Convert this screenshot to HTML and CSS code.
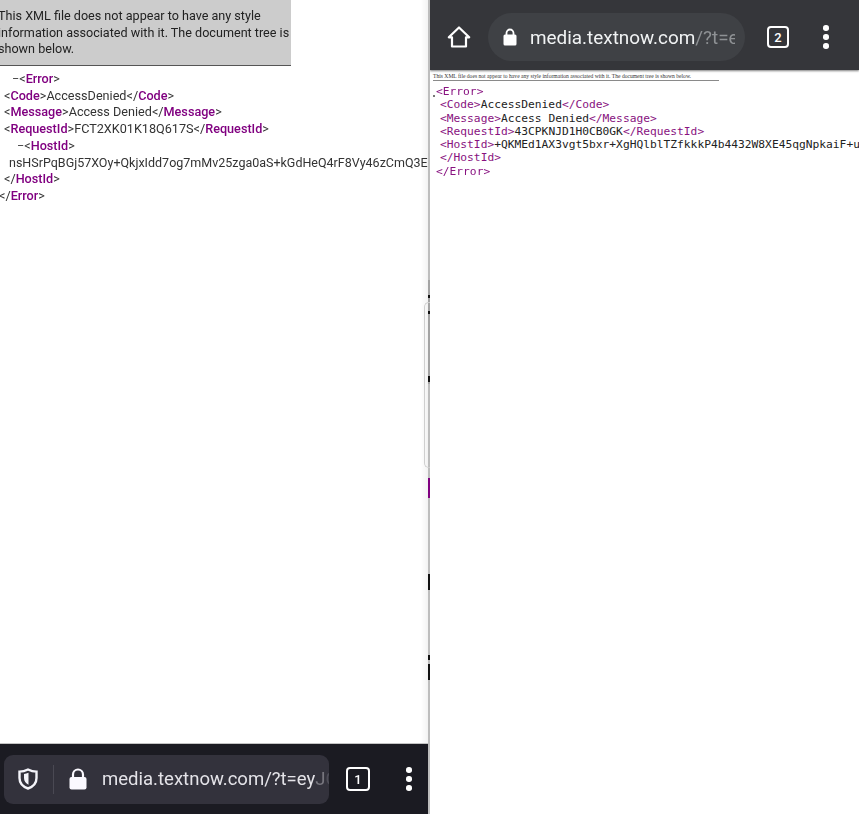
FILE: index.html
```html
<!DOCTYPE html>
<html lang="en">
<head>
<meta charset="utf-8">
<title>Access Denied</title>
<link rel="stylesheet" href="styles.css">
</head>
<body>
<div class="split">
  <section class="left">
    <div class="left-page">
      <div class="notice">This XML file does not appear to have any style<br>information associated with it. The document tree is<br>shown below.</div>
      <div class="tree">
        <div class="l-error"><span class="minus">−</span>&lt;<b>Error</b>&gt;</div>
        <div class="l-child">&lt;<b>Code</b>&gt;AccessDenied&lt;/<b>Code</b>&gt;</div>
        <div class="l-child">&lt;<b>Message</b>&gt;Access Denied&lt;/<b>Message</b>&gt;</div>
        <div class="l-child">&lt;<b>RequestId</b>&gt;FCT2XK01K18Q617S&lt;/<b>RequestId</b>&gt;</div>
        <div class="l-host"><span class="minus">−</span>&lt;<b>HostId</b>&gt;</div>
        <div class="l-value">nsHSrPqBGj57XOy+QkjxIdd7og7mMv25zga0aS+kGdHeQ4rF8Vy46zCmQ3E</div>
        <div class="l-child">&lt;/<b>HostId</b>&gt;</div>
        <div class="l-close">&lt;/<b>Error</b>&gt;</div>
      </div>
    </div>
    <div class="bottom-bar">
      <div class="bottom-url">
        <svg class="shield" viewBox="0 0 20 22" width="20" height="22"><path d="M10 1.500C7 3 4.500 3.600 1.500 3.600V10c0 5 3.400 8.700 8.500 10.500C15.100 18.700 18.500 15 18.500 10V3.600C15.500 3.600 13 3 10 1.500Z" fill="none" stroke="#f4f4fa" stroke-width="2.400"/><path d="M10.500 4.800C9 5.400 7.500 5.800 6 5.900V10c0 3 1.800 5.400 4.500 6.800Z" fill="#f4f4fa"/></svg>
        <span class="sep"></span>
        <svg class="lock" viewBox="0 0 18 22" width="18" height="22"><path d="M4 10V6.500a5 5 0 0 1 10 0V10" fill="none" stroke="#fbf9ff" stroke-width="2.200"/><rect x="0.500" y="9" width="17" height="12.500" rx="2" fill="#fbf9ff"/></svg>
        <span class="bottom-text">media.textnow.com/?t=ey<span class="fade-a">J</span><span class="fade-b">C</span></span>
      </div>
      <span class="tabs tabs-left">1</span>
      <span class="dots"><i></i><i></i><i></i></span>
    </div>
  </section>
  <div class="divider">
    <span class="outline"></span>
    <i class="mark m1"></i><i class="mark m2"></i><i class="mark m3"></i><i class="mark m4"></i><i class="mark m5"></i><i class="mark m6"></i><i class="mark m7"></i>
  </div>
  <section class="right">
    <div class="top-bar">
      <svg class="home" viewBox="0 0 24 24" width="24" height="24"><path d="M12 2.500 1.800 12.300H5V21.500H19V12.300H22.200Z" fill="none" stroke="#fff" stroke-width="2.200" stroke-linejoin="round"/></svg>
      <div class="top-url">
        <svg class="lock-top" viewBox="0 0 14 18" width="14" height="18"><path d="M3.500 8V5a3.500 3.500 0 0 1 7 0V8" fill="none" stroke="#fff" stroke-width="1.800"/><rect x="0.500" y="6.500" width="13" height="11" rx="1.500" fill="#fff"/></svg>
        <span class="top-text">media.textnow.com<span class="dim">/?t=e</span></span>
      </div>
      <span class="tabs tabs-right">2</span>
      <span class="dots dots-right"><i></i><i></i><i></i></span>
    </div>
    <div class="right-page">
      <div class="small-notice">This XML file does not appear to have any style information associated with it. The document tree is shown below.</div>
      <div class="rule"></div>
      <div class="code">
        <div class="c-root"><span class="arrow"></span><em>&lt;Error&gt;</em></div>
        <div class="c-child"><em>&lt;Code&gt;</em>AccessDenied<em>&lt;/Code&gt;</em></div>
        <div class="c-child"><em>&lt;Message&gt;</em>Access Denied<em>&lt;/Message&gt;</em></div>
        <div class="c-child"><em>&lt;RequestId&gt;</em>43CPKNJD1H0CB0GK<em>&lt;/RequestId&gt;</em></div>
        <div class="c-child"><em>&lt;HostId&gt;</em>+QKMEd1AX3vgt5bxr+XgHQlblTZfkkkP4b4432W8XE45qgNpkaiF+uZ</div>
        <div class="c-child"><em>&lt;/HostId&gt;</em></div>
        <div class="c-root"><em>&lt;/Error&gt;</em></div>
      </div>
    </div>
  </section>
</div>
</body>
</html>
```

FILE: styles.css
```css
* { box-sizing: border-box; }
html, body { margin: 0; height: 100%; background: #fff; overflow: hidden; }
.split { display: flex; width: 859px; height: 814px; filter: blur(0.35px); }

.left { width: 428px; display: flex; flex-direction: column; overflow: hidden; position: relative; }
.left::after { content: ""; position: absolute; right: 0; top: 0; width: 7px; height: 743px; background: linear-gradient(to right, rgba(0,0,0,0), rgba(0,0,0,0.05)); }
.left-page { flex: 1; min-height: 0; background: #fff; overflow: hidden; font-family: Roboto, sans-serif; font-size: 12.650px; color: #222; border-bottom: 1px solid #c4c4c4; }
.notice { width: 295px; height: 66px; margin-left: -4px; padding: 8px 0 0 2px; background: #ccc; border-bottom: 1px solid #555; font-size: 12.600px; line-height: 16.700px; color: #222; white-space: nowrap; }
.tree { line-height: 16.700px; padding-top: 5px; white-space: nowrap; color: #333; }
.tree b { color: #800080; font-weight: 500; }
.minus { color: #444; }
.l-error { padding-left: 12px; }
.l-child { padding-left: 4px; }
.l-host { padding-left: 17px; }
.l-value { padding-left: 9px; font-size: 12.500px; }
.l-close { margin-left: -1px; }

.bottom-bar { height: 70px; flex: none; background: #1b1b22; display: flex; align-items: center; padding: 0 0 0 4px; }
.bottom-url { width: 325px; height: 49px; flex: none; background: #33323c; border-radius: 9px; display: flex; align-items: center; padding-left: 14px; overflow: hidden; }
.shield { flex: none; }
.sep { width: 1px; height: 29px; flex: none; background: #4a4953; margin: 0 15px; }
.lock { margin-right: 15px; flex: none; }
.bottom-text { font-family: Roboto, sans-serif; font-size: 18.550px; color: #e4e3e8; white-space: nowrap; }
.fade-a { color: #77767e; }
.fade-b { color: #4f4e58; }
.tabs { display: flex; align-items: center; justify-content: center; flex: none; border: 2.500px solid #fff; border-radius: 4px; color: #fff; font-family: Roboto, sans-serif; font-weight: 500; }
.tabs-left { width: 24px; height: 24px; margin-left: 17px; font-size: 13px; }
.dots { display: flex; flex-direction: column; gap: 3.500px; flex: none; }
.dots i { width: 5.500px; height: 5.500px; border-radius: 50%; background: #fff; display: block; }
.bottom-bar .dots { margin-left: 36px; }

.divider { width: 2px; flex: none; background: linear-gradient(to bottom, #bdbdbd 0, #bdbdbd 280px, #a3a3a3 280px, #a3a3a3 384px, #bdbdbd 384px); position: relative; z-index: 2; }
.outline { position: absolute; left: -4px; top: 302px; width: 6px; height: 166px; border: 1px solid #cfcfcf; border-right: 0; border-radius: 5px 0 0 5px; }
.mark { position: absolute; left: 0; width: 2px; background: #111; }
.m1 { top: 295px; height: 3px; }
.m2 { top: 311px; height: 3px; }
.m3 { top: 376px; height: 6px; }
.m4 { top: 478px; height: 20px; background: #800080; }
.m5 { top: 574px; height: 16px; }
.m6 { top: 655px; height: 5px; }
.m7 { top: 664px; height: 16px; }

.right { flex: 1; min-width: 0; display: flex; flex-direction: column; overflow: hidden; }
.top-bar { height: 70px; flex: none; background: #35363a; display: flex; align-items: center; padding: 4px 0 0 17px; box-shadow: 0 1px 2px rgba(0,0,0,0.5); position: relative; }
.home { flex: none; }
.top-url { width: 257px; height: 48px; flex: none; margin-left: 17px; background: #3f4145; border-radius: 24px; display: flex; align-items: center; padding-left: 15px; overflow: hidden; white-space: nowrap; }
.lock-top { margin-right: 13px; flex: none; }
.top-text { font-family: Roboto, sans-serif; font-size: 18.900px; color: #f1f3f4; width: 205px; flex: none; overflow: hidden; }
.dim { color: #8e9194; }
.tabs-right { width: 22px; height: 22px; margin-left: 22px; font-size: 13px; background: #35363a; }
.dots-right { margin-left: 34px; }

.right-page { flex: 1; background: #fff; padding: 3px 0 0 3px; }
.small-notice { font-family: "Liberation Serif", serif; font-size: 5.600px; line-height: 7px; color: #333; white-space: nowrap; }
.rule { width: 286px; height: 1px; background: #8a8a8a; }
.code { font-family: "DejaVu Sans Mono", monospace; font-size: 11.250px; line-height: 13.300px; color: #222; white-space: nowrap; margin-top: 4px; }
.code em { font-style: normal; color: #881280; }
.c-root { padding-left: 3px; position: relative; }
.c-child { padding-left: 7px; }
.arrow { position: absolute; left: 0; top: 10px; width: 1.500px; height: 2px; background: #777; }
```
